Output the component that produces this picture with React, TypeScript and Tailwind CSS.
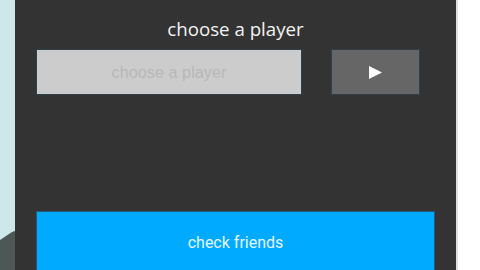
// App.tsx - player picker panel
export default function App() {
  return (
    <div className="flex h-[270px] w-[480px] overflow-hidden bg-white">
      {/* backdrop strip on the left */}
      <div className="relative h-full w-[15px] bg-[#cee7eb]">
        <svg className="absolute bottom-0 left-0" width="15" height="40" viewBox="0 0 15 40">
          <polygon points="0,10 6,6 12,2 15,1 15,40 0,40" fill="#4d5755" />
        </svg>
      </div>

      {/* main panel */}
      <div className="flex h-[300px] w-[441px] flex-col bg-[#333333] px-[21px]">
        <div className="mt-[16px] text-center text-[18.7px] leading-[26px] text-[#f2f2f2] [font-family:'Open_Sans',sans-serif]">
          choose a player
        </div>

        <div className="mt-[7px] flex gap-[29px]">
          <input
            placeholder="choose a player"
            className="h-[46px] w-[266px] border border-[#2f3f4b] bg-[#cccccc] text-center text-[16.3px] text-[#444] outline-none placeholder:text-[#b8b8b8] [font-family:'Liberation_Sans',sans-serif]"
          />
          <button className="flex h-[46px] w-[89px] items-center justify-center border border-[#2f3f4b] bg-[#666666]">
            <svg width="13" height="13" viewBox="0 0 13 13">
              <polygon points="0,0 13,6.5 0,13" fill="#ffffff" />
            </svg>
          </button>
        </div>

        <button className="mt-[116px] h-[70px] w-[399px] border border-[#245a7a] bg-[#00aaff] pb-[6px] text-[16px] text-[#e6f6ff] [font-family:Roboto,sans-serif]">
          check friends
        </button>
      </div>

      {/* light edge on the right */}
      <div className="h-full w-[2px] bg-[#dedede]" />
    </div>
  )
}
